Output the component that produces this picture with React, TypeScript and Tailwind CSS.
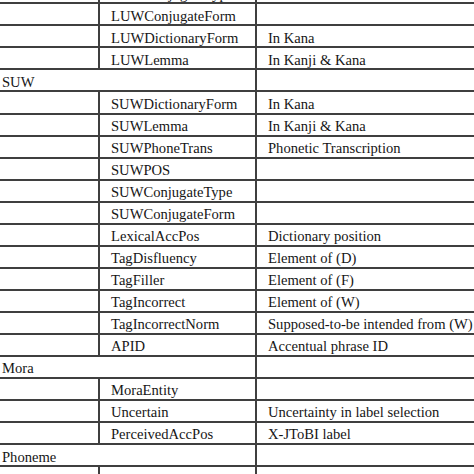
type Row =
  | { kind: 'group'; label: string }
  | { kind: 'item'; name: string; note?: string };

const rows: Row[] = [
  { kind: 'item', name: 'LUWConjugateType' },
  { kind: 'item', name: 'LUWConjugateForm' },
  { kind: 'item', name: 'LUWDictionaryForm', note: 'In Kana' },
  { kind: 'item', name: 'LUWLemma', note: 'In Kanji & Kana' },
  { kind: 'group', label: 'SUW' },
  { kind: 'item', name: 'SUWDictionaryForm', note: 'In Kana' },
  { kind: 'item', name: 'SUWLemma', note: 'In Kanji & Kana' },
  { kind: 'item', name: 'SUWPhoneTrans', note: 'Phonetic Transcription' },
  { kind: 'item', name: 'SUWPOS' },
  { kind: 'item', name: 'SUWConjugateType' },
  { kind: 'item', name: 'SUWConjugateForm' },
  { kind: 'item', name: 'LexicalAccPos', note: 'Dictionary position' },
  { kind: 'item', name: 'TagDisfluency', note: 'Element of (D)' },
  { kind: 'item', name: 'TagFiller', note: 'Element of (F)' },
  { kind: 'item', name: 'TagIncorrect', note: 'Element of (W)' },
  { kind: 'item', name: 'TagIncorrectNorm', note: 'Supposed-to-be intended from (W)' },
  { kind: 'item', name: 'APID', note: 'Accentual phrase ID' },
  { kind: 'group', label: 'Mora' },
  { kind: 'item', name: 'MoraEntity' },
  { kind: 'item', name: 'Uncertain', note: 'Uncertainty in label selection' },
  { kind: 'item', name: 'PerceivedAccPos', note: 'X-JToBI label' },
  { kind: 'group', label: 'Phoneme' },
  { kind: 'item', name: '' },
];

const cell = 'pt-[1.3px] leading-[20px] whitespace-nowrap overflow-visible';

export default function App() {
  return (
    <div className="w-[474px] h-[474px] overflow-hidden bg-white text-[#161616] font-['Liberation_Serif',serif] text-[14.6px]">
      <div className="-mt-[17.75px] w-[560px]">
        {rows.map((row, i) =>
          row.kind === 'group' ? (
            <div key={i} className="flex h-[22.05px] border-b-2 border-[#3f3f3f]">
              <div className={`w-[257px] shrink-0 border-r-2 border-[#3f3f3f] pl-[2px] ${cell}`}>
                {row.label}
              </div>
              <div className="flex-1" />
            </div>
          ) : (
            <div key={i} className="flex h-[22.05px] border-b-2 border-[#3f3f3f]">
              <div className="w-[100px] shrink-0 border-r-2 border-[#3f3f3f]" />
              <div className={`w-[157px] shrink-0 border-r-2 border-[#3f3f3f] pl-[11px] ${cell}`}>
                {row.name}
              </div>
              <div className={`flex-1 pl-[11px] ${cell}`}>{row.note}</div>
            </div>
          )
        )}
      </div>
    </div>
  );
}
